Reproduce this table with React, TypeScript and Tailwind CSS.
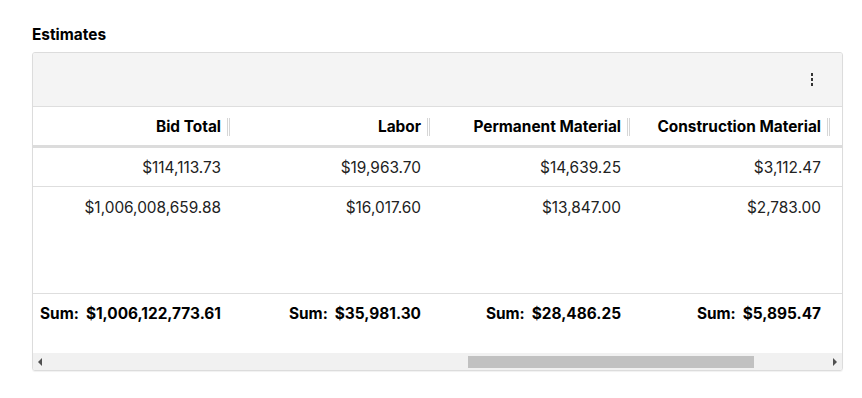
import React from "react";

const columns = [
    { key: "bid", label: "Bid Total", values: ["$114,113.73", "$1,006,008,659.88"], sum: "$1,006,122,773.61" },
    { key: "labor", label: "Labor", values: ["$19,963.70", "$16,017.60"], sum: "$35,981.30" },
    { key: "perm", label: "Permanent Material", values: ["$14,639.25", "$13,847.00"], sum: "$28,486.25" },
    { key: "cons", label: "Construction Material", values: ["$3,112.47", "$2,783.00"], sum: "$5,895.47" },
];

const rowCount = 2;

export default function App() {
    return (
        <div className="min-h-[398px] w-[862px] bg-white pl-8 pt-[25px] text-[#222]" style={{ fontFamily: "Inter, 'Noto Sans', sans-serif" }}>
            <h2 className="mb-[7px] h-5 text-[15.4px] font-bold leading-5 text-black">Estimates</h2>

            <div className="w-[811px] overflow-hidden rounded-[3px] border border-[#dcdcdc] shadow-[0_1px_1px_rgba(0,0,0,0.06)]">
                {/* Toolbar */}
                <div className="flex h-[54px] items-center justify-end border-b border-[#dedede] bg-[#f4f4f4] pr-[29px]">
                    <div className="flex flex-col gap-[2px]">
                        <span className="h-[3px] w-[2px] bg-[#333]" />
                        <span className="h-[3px] w-[2px] bg-[#333]" />
                        <span className="h-[3px] w-[2px] bg-[#333]" />
                    </div>
                </div>

                {/* Header */}
                <div className="flex h-[41px] border-b-[3px] border-[#dcdcdc]">
                    {columns.map((col) => (
                        <div key={col.key} className="flex w-[200px] shrink-0 items-center justify-end pr-[3px] pt-[2px]">
                            <span className="text-[15.4px] font-bold text-black">{col.label}</span>
                            <span className="ml-[6px] flex h-[18px] gap-[1px]">
                                <span className="w-px bg-[#d6d6d6]" />
                                <span className="w-px bg-[#d6d6d6]" />
                            </span>
                        </div>
                    ))}
                </div>

                {/* Body */}
                <div className="h-[146px] border-b border-[#dedede]">
                    {Array.from({ length: rowCount }).map((_, i) => (
                        <div key={i} className={`flex h-[39px] ${i === 0 ? "border-b border-[#dedede]" : ""}`}>
                            {columns.map((col) => (
                                <div key={col.key} className="flex w-[200px] shrink-0 items-center justify-end pr-3 pt-[2px] text-[15.4px] text-[#222]">
                                    {col.values[i]}
                                </div>
                            ))}
                        </div>
                    ))}
                </div>

                {/* Footer sums */}
                <div className="flex h-[59px]">
                    {columns.map((col) => (
                        <div key={col.key} className="flex h-[38px] w-[200px] shrink-0 items-center justify-end gap-[7px] pr-3 pt-[2px] text-[15.4px] font-bold text-black">
                            <span>Sum:</span>
                            <span>{col.sum}</span>
                        </div>
                    ))}
                </div>

                {/* Horizontal scrollbar */}
                <div className="flex h-[17px] items-center bg-[#f1f1f1]">
                    <div className="flex w-[14px] justify-center">
                        <span className="h-0 w-0 border-y-[4px] border-r-[4px] border-y-transparent border-r-[#505050]" />
                    </div>
                    <div className="flex flex-1 items-center pl-[421px]">
                        <div className="h-[12px] w-[286px] bg-[#c1c1c1]" />
                    </div>
                    <div className="flex w-[14px] justify-center">
                        <span className="h-0 w-0 border-y-[4px] border-l-[4px] border-y-transparent border-l-[#505050]" />
                    </div>
                </div>
            </div>
        </div>
    );
}
